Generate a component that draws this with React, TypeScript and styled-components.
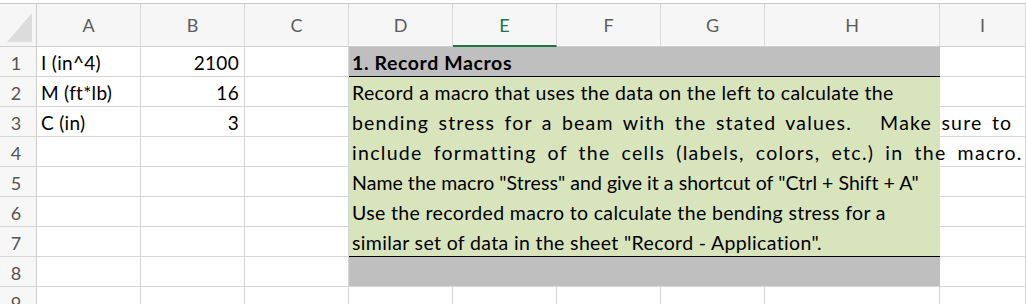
import styled, { createGlobalStyle } from "styled-components";

const GlobalStyle = createGlobalStyle`
  html, body {
    margin: 0;
    padding: 0;
    background: #ffffff;
    overflow: hidden;
  }
  body {
    font-family: Lato, "Liberation Sans", sans-serif;
  }
`;

const Sheet = styled.div`
  margin-top: 3px;
  border-top: 1px solid #c9c9c9;
  display: grid;
  grid-template-columns: 37px repeat(7, 104px) 175px 1fr;
  grid-template-rows: 43px repeat(9, 30px);
  width: 1026px;
  height: 300px;
  overflow: hidden;
`;

const Corner = styled.div`
  background: #f6f6f6;
  border-right: 1px solid #cfcfcf;
  border-bottom: 1px solid #cfcfcf;
  display: flex;
  align-items: flex-end;
  justify-content: flex-end;
  padding: 0 4px 4px 0;
  box-sizing: border-box;
`;

const ColHeader = styled.div<{ $active?: boolean }>`
  background: #f6f6f6;
  border-right: 1px solid #dadada;
  border-bottom: ${(p) => (p.$active ? "2px solid #217346" : "1px solid #cfcfcf")};
  box-sizing: border-box;
  display: flex;
  align-items: center;
  justify-content: center;
  padding-top: ${(p) => (p.$active ? "1px" : "0")};
  font-size: 18px;
  color: ${(p) => (p.$active ? "#217346" : "#5c5c5c")};
`;

const RowHeader = styled.div`
  background: #f7f7f7;
  border-right: 1px solid #cfcfcf;
  border-bottom: 1px solid #d6d6d6;
  box-sizing: border-box;
  display: flex;
  align-items: center;
  justify-content: center;
  padding: 3px 4px 0 0;
  font-size: 18px;
  color: #555555;
`;

const Cell = styled.div<{ $num?: boolean }>`
  border-right: 1px solid #d6d6d6;
  border-bottom: 1px solid #d6d6d6;
  box-sizing: border-box;
  display: flex;
  align-items: center;
  justify-content: ${(p) => (p.$num ? "flex-end" : "flex-start")};
  padding: 1px 5px 0 4px;
  font-size: 19px;
  letter-spacing: 0.3px;
  color: #000000;
  white-space: nowrap;
`;

const Note = styled.div`
  grid-column: 5 / 10;
  grid-row: 2 / 10;
  z-index: 1;
  display: flex;
  flex-direction: column;
`;

const NoteTitle = styled.div`
  height: 30px;
  box-sizing: border-box;
  background: #bfbfbf;
  border-bottom: 1px solid #000000;
  display: flex;
  align-items: center;
  padding: 1px 3px 0;
  font-size: 19.5px;
  letter-spacing: 0.6px;
  font-weight: 700;
  color: #000000;
`;

const NoteLine = styled.div<{ $last?: boolean; $spacing?: number; $wordGap?: number }>`
  height: 30px;
  box-sizing: border-box;
  background: #d8e4bc;
  border-bottom: ${(p) => (p.$last ? "1px solid #000000" : "none")};
  display: flex;
  align-items: center;
  padding: 1px 3px 0;
  font-size: 19.5px;
  letter-spacing: ${(p) => p.$spacing ?? 0.35}px;
  word-spacing: ${(p) => p.$wordGap ?? 0}px;
  color: #000000;
  white-space: pre;
`;

const NoteFooter = styled.div`
  height: 30px;
  box-sizing: border-box;
  background: #bfbfbf;
  border-bottom: 1px solid #d6d6d6;
`;

const columns = ["A", "B", "C", "D", "E", "F", "G", "H", "I"];

const labels = ["I (in^4)", "M (ft*lb)", "C (in)"];
const values = ["2100", "16", "3"];

const noteLines = [
  { text: "Record a macro that uses the data on the left to calculate the" },
  {
    text: "bending stress for a beam with the stated values.   Make sure to",
    spacing: 1.2,
    gap: 3.2,
  },
  {
    text: "include formatting of the cells (labels, colors, etc.) in the macro.",
    spacing: 1.3,
    gap: 4.7,
  },
  { text: 'Name the macro "Stress" and give it a shortcut of "Ctrl + Shift + A"', spacing: 0.05 },
  { text: "Use the recorded macro to calculate the bending stress for a" },
  { text: 'similar set of data in the sheet "Record - Application".' },
];

export default function App() {
  const rows = [1, 2, 3, 4, 5, 6, 7, 8, 9];
  return (
    <>
      <GlobalStyle />
      <Sheet>
        <Corner>
          <svg width="25" height="29" viewBox="0 0 25 29">
            <polygon points="25,0 25,29 0,29" fill="#dcdcdc" />
          </svg>
        </Corner>
        {columns.map((c) => (
          <ColHeader key={c} $active={c === "E"}>
            {c}
          </ColHeader>
        ))}

        {rows.map((r) => (
          <>
            <RowHeader key={`h${r}`} style={{ gridRow: r + 1, gridColumn: 1 }}>
              {r}
            </RowHeader>
            <Cell key={`a${r}`} style={{ gridRow: r + 1, gridColumn: 2 }}>
              {labels[r - 1] ?? ""}
            </Cell>
            <Cell key={`b${r}`} $num style={{ gridRow: r + 1, gridColumn: 3 }}>
              {values[r - 1] ?? ""}
            </Cell>
            <Cell key={`c${r}`} style={{ gridRow: r + 1, gridColumn: 4 }} />
            {r === 9 &&
              [5, 6, 7, 8, 9].map((col) => (
                <Cell key={`x${col}`} style={{ gridRow: 10, gridColumn: col }} />
              ))}
            <Cell key={`i${r}`} style={{ gridRow: r + 1, gridColumn: 10 }} />
          </>
        ))}

        <Note>
          <NoteTitle>1. Record Macros</NoteTitle>
          {noteLines.map((line, i) => (
            <NoteLine
              key={i}
              $last={i === noteLines.length - 1}
              $spacing={line.spacing}
              $wordGap={line.gap}
            >
              {line.text}
            </NoteLine>
          ))}
          <NoteFooter />
        </Note>
      </Sheet>
    </>
  );
}
